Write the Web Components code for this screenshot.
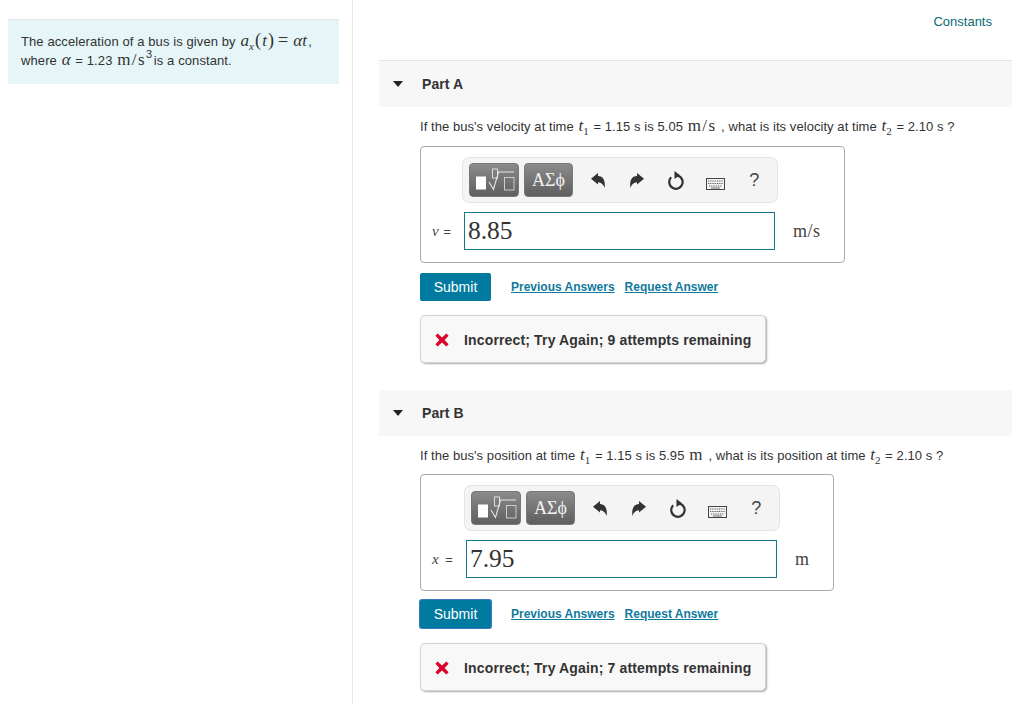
<!DOCTYPE html>
<html>
<head>
<meta charset="utf-8">
<title>Bus acceleration</title>
<style>
  html, body { margin: 0; padding: 0; background: #fff; height: 704px; overflow: hidden; }
  body { font-family: "Liberation Sans", Arial, sans-serif; color: #333; }
  i.m { font-family: "Liberation Serif", serif; font-style: italic; font-size: 17px; margin: 0 1px; line-height: 0; }
  i.m sub { font-size: 11px; font-style: normal; line-height: 0; }
  i.m sub.s { font-style: italic; }
  span.u { font-family: "Liberation Serif", serif; font-size: 17px; letter-spacing: 1.4px; margin: 0 1px; line-height: 0; }
  span.u sup { font: 11px "Liberation Sans", sans-serif; line-height: 0; letter-spacing: 0; margin-right: -3px; }
  span.p { font-family: "Liberation Serif", serif; font-size: 18px; line-height: 0; }
  span.op { font-family: "Liberation Serif", serif; font-size: 18px; margin: 0 4px; line-height: 0; }
</style>
</head>
<body>

<bus-page>
  <info-panel slot="info">
    The acceleration of a bus is given by <i class="m">a<sub class="s">x</sub></i><span class="p">(</span><i class="m">t</i><span class="p">)</span><span class="op">=</span><i class="m">αt</i>,<br>
    where <i class="m">α</i> = 1.23 <span class="u">m/s<sup>3</sup></span> is a constant.
  </info-panel>

  <quiz-part slot="parts" name="Part A" label="v" value="8.85" unit="m/s" attempts="9" topline>
    If the bus's velocity at time <i class="m">t<sub>1</sub></i> = 1.15 s is 5.05 <span class="u">m/s</span> , what is its velocity at time <i class="m">t<sub>2</sub></i> = 2.10 s ?
  </quiz-part>

  <quiz-part slot="parts" name="Part B" label="x" value="7.95" unit="m" attempts="7" focused>
    If the bus's position at time <i class="m">t<sub>1</sub></i> = 1.15 s is 5.95 <span class="u">m</span> , what is its position at time <i class="m">t<sub>2</sub></i> = 2.10 s ?
  </quiz-part>
</bus-page>

<script>
(function() {
    // page shell: left info column, right parts column
    class BusPage extends HTMLElement {
        constructor() {
            super();
            this.attachShadow({ mode: 'open' }).innerHTML = `
              <style>
                :host { display: flex; height: 704px; }
                .left { width: 353px; box-sizing: border-box; padding: 19px 13px 0 8px; border-right: 1px solid #e8e8e8; flex: none; }
                .right { flex: 1; box-sizing: border-box; padding: 0 12px 0 26px; min-width: 0; }
                .constants { height: 60px; box-sizing: border-box; padding: 14px 20px 0 0; text-align: right; font-size: 13px; line-height: 15px; color: #0a6a75; }
              </style>
              <div class="left"><slot name="info"></slot></div>
              <div class="right">
                <div class="constants">Constants</div>
                <slot name="parts"></slot>
              </div>`;
        }
    }

    class InfoPanel extends HTMLElement {
        constructor() {
            super();
            this.attachShadow({ mode: 'open' }).innerHTML = `
              <style>
                :host { display: block; box-sizing: border-box; height: 65px; padding: 12px 13px 0; background: #e6f5f7; border-top: 1px solid #dfe6e7; font-size: 13px; letter-spacing: .1px; line-height: 19px; color: #333; }
              </style>
              <slot></slot>`;
        }
    }

    const ICONS = {
        undo: '<svg width="14" height="15" viewBox="0 0 14 15"><path d="M0 5.7 L7 0 V3 C12 3 14.6 7 13.6 15 C12.6 11.5 10.5 9.4 7 9.2 V11.6 Z" fill="#333"/></svg>',
        redo: '<svg width="14" height="15" viewBox="0 0 14 15"><path d="M14 5.7 L7 0 V3 C2 3 -0.6 7 0.4 15 C1.4 11.5 3.5 9.4 7 9.2 V11.6 Z" fill="#333"/></svg>',
        refresh: '<svg width="16" height="19" viewBox="0 0 16 19"><path d="M7 4.4 A6.7 6.7 0 1 1 3.2 6.3" fill="none" stroke="#333" stroke-width="2.2"/><path d="M6.5 0 L12 4.2 L6.5 8 Z" fill="#333"/></svg>',
        keyboard: '<svg width="19" height="12" viewBox="0 0 19 12" style="margin-top:7px"><rect x="0.5" y="0.5" width="18" height="11" fill="#f4f4f4" stroke="#444"/><path d="M2 3h15M2 5.5h15M3 8h13" stroke="#555" stroke-width="1.2" stroke-dasharray="1 .8" fill="none"/><path d="M5 10h9" stroke="#666"/></svg>'
    };

    class MathToolbar extends HTMLElement {
        constructor() {
            super();
            this.attachShadow({ mode: 'open' }).innerHTML = `
              <style>
                :host { display: flex; align-items: center; box-sizing: border-box; width: 316px; height: 46px; padding: 0 3px 0 6px; margin-left: -2px; background: #f4f4f4; border: 1px solid #e4e4e4; border-radius: 7px; }
                .btn { display: flex; align-items: center; justify-content: center; box-sizing: border-box; width: 50px; height: 34px; border-radius: 4px; background: linear-gradient(#8b8b8b, #5f5f5f); border: 1px solid #777; color: #f2f2f2; }
                .tpl { margin-right: 5px; }
                .sym { margin-right: 5px; font: 18px "Liberation Serif", serif; }
                .ic { flex: none; width: 39.2px; height: 34px; display: flex; align-items: center; justify-content: center; color: #444; }
                .q { font-size: 18px; }
              </style>
              <div class="btn tpl">
                <svg width="48" height="32" viewBox="1 1 48 32">
                  <rect x="7" y="13.5" width="10" height="13" fill="#fff"/>
                  <rect x="23.5" y="6" width="5" height="9" fill="none" stroke="#ddd"/>
                  <path d="M20 19 L24.5 26.5 L29.5 9 H45" fill="none" stroke="#e8e8e8" stroke-width="1.1"/>
                  <rect x="35.5" y="14.5" width="9.5" height="12.5" fill="none" stroke="#ccc"/>
                </svg>
              </div>
              <div class="btn sym">ΑΣϕ</div>
              <div class="ic">${ICONS.undo}</div>
              <div class="ic">${ICONS.redo}</div>
              <div class="ic">${ICONS.refresh}</div>
              <div class="ic">${ICONS.keyboard}</div>
              <div class="ic q">?</div>`;
        }
    }

    class AnswerBox extends HTMLElement {
        connectedCallback() {
            if (this.shadowRoot) return;
            const label = this.getAttribute('label');
            this.attachShadow({ mode: 'open' }).innerHTML = `
              <style>
                :host { display: inline-grid; grid-template-columns: auto 311px auto; column-gap: 0; row-gap: 9px; box-sizing: border-box; height: 117px; padding: 10px 24px 12px 11px; background: #fff; border: 1px solid #aaa; border-radius: 4px; align-items: center; }
                math-toolbar { grid-column: 2; grid-row: 1; }
                .label { grid-column: 1; grid-row: 2; padding-right: 13px; font-size: 13px; word-spacing: 1px; color: #444; white-space: nowrap; }
                .label i { font: italic 15px "Liberation Serif", serif; ${label === 'x' ? 'letter-spacing: 2px;' : ''} }
                .input { grid-column: 2; grid-row: 2; box-sizing: border-box; height: 38px; border: 1px solid #14788f; padding-left: 3px; font: 25.5px/36px "Liberation Serif", serif; color: #333; }
                .unit { grid-column: 3; grid-row: 2; padding-left: 18px; font: 18px "Liberation Serif", serif; letter-spacing: .5px; color: #444; }
              </style>
              <math-toolbar></math-toolbar>
              <div class="label"><i>${label}</i> =</div>
              <div class="input">${this.getAttribute('value')}</div>
              <div class="unit">${this.getAttribute('unit')}</div>`;
        }
    }

    class FeedbackBox extends HTMLElement {
        constructor() {
            super();
            this.attachShadow({ mode: 'open' }).innerHTML = `
              <style>
                :host { display: flex; align-items: center; box-sizing: border-box; width: 346px; height: 48px; padding: 1px 0 0 14px; background: #f8f8f8; border: 1px solid #d4d4d4; border-radius: 5px; box-shadow: 1px 1px 2px #aaa; font-weight: bold; font-size: 14px; letter-spacing: .15px; color: #333; white-space: nowrap; }
                svg { margin-right: 15px; flex: none; }
              </style>
              <svg width="14" height="14" viewBox="0 0 14 14"><path d="M2.6 0.6 L7 4.4 L11.4 0.6 L13.6 2.8 L9.6 7 L13.6 11.2 L11.4 13.4 L7 9.6 L2.6 13.4 L0.4 11.2 L4.4 7 L0.4 2.8 Z" fill="#d9042b"/></svg>
              <slot></slot>`;
        }
    }

    class QuizPart extends HTMLElement {
        connectedCallback() {
            if (this.shadowRoot) return;
            const a = n => this.getAttribute(n);
            const top = this.hasAttribute('topline');
            this.attachShadow({ mode: 'open' }).innerHTML = `
              <style>
                :host { display: block; height: 330px; }
                .head { display: flex; align-items: center; box-sizing: border-box; height: ${top ? 47 : 46}px; padding-left: 14px; background: #f7f7f7; ${top ? 'border-top: 1px solid #e4e4e4;' : ''} font-weight: bold; font-size: 14px; letter-spacing: .1px; color: #333; }
                .tri { width: 0; height: 0; border-style: solid; border-width: 6px 5.5px 0 5.5px; border-color: #222 transparent transparent transparent; margin-right: 19px; }
                .body { padding-left: 41px; }
                .q { height: ${top ? 39 : 38}px; box-sizing: border-box; padding-top: 11px; font-size: 13px; letter-spacing: .06px; line-height: 18px; color: #333; white-space: nowrap; }
                .actions { display: flex; align-items: center; margin-top: ${top ? 10 : 9}px; margin-bottom: ${top ? 14 : 15}px; }
                .submit { box-sizing: border-box; width: 71px; height: 28px; line-height: 28px; text-align: center; background: #007a9e; color: #fff; font-size: 14px; border-radius: 2px; margin-right: 20px; }
                .submit.focus { box-shadow: 0 0 0 1px #3a78c2; }
                a { color: #0f7a9e; font-weight: bold; font-size: 12px; text-decoration: underline; margin-right: 10px; }
                answer-box { vertical-align: top; }
                .ans { height: 117px; }
              </style>
              <div class="head"><span class="tri"></span>${a('name')}</div>
              <div class="body">
                <div class="q"><slot></slot></div>
                <div class="ans"><answer-box label="${a('label')}" value="${a('value')}" unit="${a('unit')}"></answer-box></div>
                <div class="actions">
                  <div class="submit${this.hasAttribute('focused') ? ' focus' : ''}">Submit</div>
                  <a>Previous Answers</a><a>Request Answer</a>
                </div>
                <feedback-box>Incorrect; Try Again; ${a('attempts')} attempts remaining</feedback-box>
              </div>`;
        }
    }

    customElements.define('math-toolbar', MathToolbar);
    customElements.define('answer-box', AnswerBox);
    customElements.define('feedback-box', FeedbackBox);
    customElements.define('info-panel', InfoPanel);
    customElements.define('quiz-part', QuizPart);
    customElements.define('bus-page', BusPage);
})();
</script>
</body>
</html>
